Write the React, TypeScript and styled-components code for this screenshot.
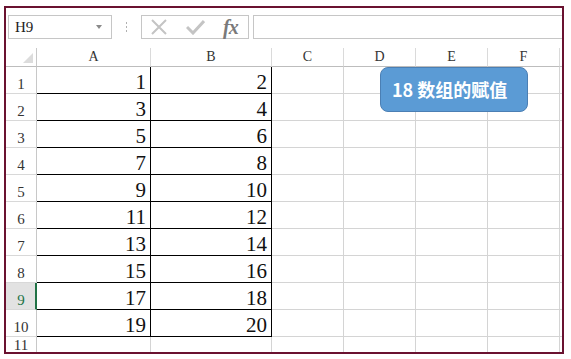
import React from "react";
import styled, { createGlobalStyle } from "styled-components";

const Global = createGlobalStyle`
  html, body { margin: 0; padding: 0; background: #ffffff; }
  #root { width: 571px; height: 359px; }
`;

const Frame = styled.div`
  position: relative;
  box-sizing: border-box;
  margin: 6px 0 0 4px;
  width: 560px;
  height: 348px;
  border: 2px solid #6a1230;
  overflow: hidden;
  display: flex;
  flex-direction: column;
  background: #fff;
`;

const FormulaBar = styled.div`
  display: flex;
  align-items: center;
  padding: 7px 0 0 2px;
  height: 24px;
`;

const NameBox = styled.div`
  box-sizing: border-box;
  width: 104px;
  height: 24px;
  border: 1px solid #c6c6c6;
  display: flex;
  align-items: center;
  justify-content: space-between;
  padding: 0 9px 0 6px;
  font-family: "Liberation Serif", "DejaVu Serif", serif;
  font-size: 15px;
  color: #222;
`;

const DropArrow = styled.span`
  width: 0;
  height: 0;
  border-left: 3px solid transparent;
  border-right: 3px solid transparent;
  border-top: 4px solid #8a8a8a;
`;

const Dots = styled.div`
  width: 29px;
  display: flex;
  flex-direction: column;
  align-items: center;
  gap: 2px;
  & > span {
    width: 1px;
    height: 2px;
    background: #b0b0b0;
  }
`;

const Buttons = styled.div`
  box-sizing: border-box;
  width: 108px;
  height: 24px;
  border: 1px solid #c6c6c6;
  display: flex;
  align-items: center;
  padding: 0 0 0 8px;
  gap: 18px;
`;

const Fx = styled.span`
  font-family: "Liberation Serif", serif;
  font-style: italic;
  font-weight: bold;
  font-size: 20px;
  color: #7a7a7a;
  line-height: 1;
  letter-spacing: -1px;
`;

const FormulaInput = styled.div`
  box-sizing: border-box;
  flex: 1;
  height: 24px;
  margin-left: 4px;
  border: 1px solid #c6c6c6;
  border-right: none;
  margin-right: -4px;
`;

const Sheet = styled.div`
  position: relative;
  margin-top: 9px;
  flex: 1;
  display: grid;
  grid-template-columns: 31px 114px 121px 72px 72px 72px 72px 1fr;
  grid-template-rows: 19px repeat(10, 27px) 1fr;
`;

const Corner = styled.div`
  position: relative;
  box-sizing: border-box;
  border-right: 1px solid #c8c8c8;
  border-bottom: 1px solid #bdbdbd;
  &::after {
    content: "";
    position: absolute;
    right: 3px;
    bottom: 3px;
    width: 0;
    height: 0;
    border-left: 10px solid transparent;
    border-bottom: 10px solid #dcdcdc;
  }
`;

const ColHead = styled.div<{ $last?: boolean }>`
  box-sizing: border-box;
  border-right: ${(p) => (p.$last ? "none" : "1px solid #dadada")};
  border-bottom: 1px solid #bdbdbd;
  display: flex;
  align-items: flex-end;
  justify-content: center;
  padding-bottom: 1px;
  font-family: "Liberation Serif", "DejaVu Serif", serif;
  font-size: 14px;
  color: #333;
`;

const RowHead = styled.div<{ $active?: boolean }>`
  box-sizing: border-box;
  border-right: ${(p) => (p.$active ? "2px solid #217346" : "1px solid #c8c8c8")};
  border-bottom: 1px solid #d8d8d8;
  background: ${(p) => (p.$active ? "#e2e2e2" : "#fff")};
  display: flex;
  align-items: flex-end;
  justify-content: center;
  padding-left: ${(p) => (p.$active ? "1px" : "0")};
  font-family: "Liberation Serif", "DejaVu Serif", serif;
  font-size: 15px;
  color: ${(p) => (p.$active ? "#217346" : "#333")};
`;

const Cell = styled.div<{ $boldRight?: boolean; $boldBottom?: boolean; $last?: boolean }>`
  box-sizing: border-box;
  border-right: ${(p) =>
    p.$last ? "none" : p.$boldRight ? "1px solid #000" : "1px solid #d4d4d4"};
  border-bottom: ${(p) => (p.$boldBottom ? "1px solid #000" : "1px solid #d4d4d4")};
  display: flex;
  align-items: flex-end;
  justify-content: flex-end;
  padding: 0 4px 0 0;
  font-family: "Liberation Serif", "DejaVu Serif", serif;
  font-size: 21px;
  line-height: 1;
  color: #111;
`;

const Callout = styled.div`
  position: absolute;
  left: 374px;
  top: 19px;
  box-sizing: border-box;
  width: 148px;
  height: 45px;
  border: 1px solid #4b7fb4;
  border-radius: 8px;
  background: #5b9bd5;
  display: flex;
  align-items: center;
  padding-left: 11px;
  font-family: "Noto Sans CJK SC", "Noto Sans", sans-serif;
  font-weight: bold;
  font-size: 18px;
  color: #fff;
  padding-bottom: 2px;
  white-space: nowrap;
`;

const cols = ["A", "B", "C", "D", "E", "F", ""];

export default function App() {
  const rows = Array.from({ length: 11 }, (_, i) => i + 1);
  return (
    <>
      <Global />
      <Frame>
        <FormulaBar>
          <NameBox>
            <span>H9</span>
            <DropArrow />
          </NameBox>
          <Dots>
            <span />
            <span />
            <span />
          </Dots>
          <Buttons>
            <svg width="18" height="16" viewBox="0 0 18 16">
              <path d="M2 1 L16 15 M16 1 L2 15" stroke="#c4c4c4" strokeWidth="2" fill="none" />
            </svg>
            <svg width="19" height="16" viewBox="0 0 19 16">
              <path d="M1 8 L7 14 L18 2" stroke="#c4c4c4" strokeWidth="3" fill="none" />
            </svg>
            <Fx>fx</Fx>
          </Buttons>
          <FormulaInput />
        </FormulaBar>
        <Sheet>
          <Corner />
          {cols.map((c, i) => (
            <ColHead key={"h" + i} $last={i === cols.length - 1}>
              {c}
            </ColHead>
          ))}
          {rows.map((r) => (
            <React.Fragment key={r}>
              <RowHead $active={r === 9}>{r}</RowHead>
              {cols.map((_, ci) => {
                const data = r <= 10 && ci < 2;
                return (
                  <Cell
                    key={ci}
                    $boldRight={ci < 2 && r <= 10}
                    $boldBottom={data}
                    $last={ci === cols.length - 1}
                  >
                    {data ? String((r - 1) * 2 + ci + 1) : ""}
                  </Cell>
                );
              })}
            </React.Fragment>
          ))}
          <Callout>18 数组的赋值</Callout>
        </Sheet>
      </Frame>
    </>
  );
}
